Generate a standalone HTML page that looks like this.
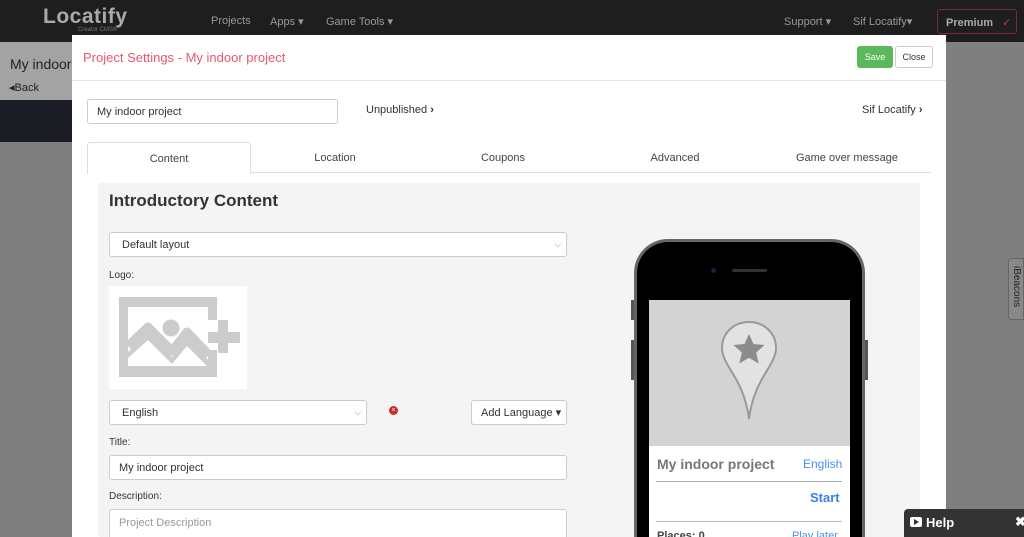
<!DOCTYPE html>
<html style="overflow:hidden;height:537px"><head><style>
*{box-sizing:border-box;margin:0;padding:0}
html,body{overflow:hidden}
body{width:1024px;height:537px;background:#7f7f7f;font-family:"Liberation Sans",sans-serif;position:relative;color:#333}
.a{position:absolute}
.nav{left:0;top:0;width:1024px;height:42px;background:#1e1e1e}
.nl{color:#999;font-size:11px;top:15px}
.inp{background:#fff;border:1px solid #ccc;border-radius:3px;font-size:11px;padding-left:9px;display:flex;align-items:center}
.tab{top:142px;height:31px;font-size:11px;display:flex;align-items:center;justify-content:center;color:#444}
</style></head><body>
<div class="a nav"></div>
<div class="a" style="left:43px;top:5px;color:#aaa;font-size:21px;font-weight:bold;letter-spacing:0.5px">Locatify</div>
<div class="a" style="left:78px;top:27px;color:#777;font-size:6px">Creator CMS®</div>
<div class="a nl" style="left:211px">Projects</div>
<div class="a nl" style="left:270px">Apps ▾</div>
<div class="a nl" style="left:326px">Game Tools ▾</div>
<div class="a nl" style="left:784px">Support ▾</div>
<div class="a nl" style="left:853px">Sif Locatify▾</div>
<div class="a" style="left:937px;top:9px;width:80px;height:25px;border:1px solid #7a2a3a;border-radius:3px;color:#aaa;font-size:11px;font-weight:bold;padding:6px 0 0 8px">Premium <span style="color:#c0394f;font-weight:normal;margin-left:6px">✓</span></div>
<div class="a" style="left:0;top:42px;width:72px;height:58px;background:#a3a3a3"></div>
<div class="a" style="left:10px;top:56px;font-size:14px;color:#222">My indoor</div>
<div class="a" style="left:9px;top:81px;font-size:11px;color:#222">◂Back</div>
<div class="a" style="left:0;top:100px;width:72px;height:42px;background:#1b1d24"></div>
<div class="a" style="left:72px;top:35px;width:874px;height:502px;background:#fff"></div>
<div class="a" style="left:83px;top:50px;font-size:13px;color:#e8586f">Project Settings - My indoor project</div>
<div class="a" style="left:857px;top:46px;width:36px;height:22px;background:#5cb85c;border-radius:3px;color:#fff;font-size:9px;display:flex;align-items:center;justify-content:center">Save</div>
<div class="a" style="left:895px;top:46px;width:38px;height:22px;border:1px solid #ccc;border-radius:3px;color:#333;font-size:9px;display:flex;align-items:center;justify-content:center">Close</div>
<div class="a" style="left:72px;top:80px;width:874px;height:1px;background:#e5e5e5"></div>
<div class="a inp" style="left:87px;top:99px;width:251px;height:25px">My indoor project</div>
<div class="a" style="left:366px;top:104px;font-size:11px">Unpublished <b>›</b></div>
<div class="a" style="left:862px;top:104px;font-size:11px">Sif Locatify <b>›</b></div>
<div class="a" style="left:87px;top:172px;width:844px;height:1px;background:#ddd"></div>
<div class="a tab" style="left:87px;width:164px;background:#fff;border:1px solid #ddd;border-bottom:none;border-radius:3px 3px 0 0;height:32px">Content</div>
<div class="a tab" style="left:251px;width:168px">Location</div>
<div class="a tab" style="left:419px;width:168px">Coupons</div>
<div class="a tab" style="left:591px;width:168px">Advanced</div>
<div class="a tab" style="left:763px;width:168px">Game over message</div>
<div class="a" style="left:98px;top:183px;width:822px;height:354px;background:#f4f4f4;border-radius:3px"></div>
<div class="a" style="left:109px;top:191px;font-size:17px;font-weight:bold;color:#333">Introductory Content</div>
<div class="a inp" style="left:109px;top:232px;width:458px;height:25px;padding-left:12px">Default layout<span style="position:absolute;right:5px;font-size:8px;color:#888">⌵</span></div>
<div class="a" style="left:109px;top:270px;font-size:10px">Logo:</div>
<div class="a" style="left:109px;top:286px;width:138px;height:103px;background:#fff"></div>
<svg class="a" style="left:109px;top:286px" width="138" height="103">
<path d="M10 11h98v23h-9V21H19v60h80v-17h9v27H10z" fill="#ccc"/>
<path d="M19 60l20-19 24 24 15-19 22 23" fill="none" stroke="#ccc" stroke-width="9" stroke-linejoin="round"/>
<path d="M19 66l20-19 24 24 15-19 22 23V81H19z" fill="#ccc"/>
<path d="M19 72l20-18 24 24 15-18 20 20H19z" fill="#fff"/>
<circle cx="62" cy="42" r="8.5" fill="#ccc"/>
<path d="M109 34h10v12h12v11h-12v10h-10V57H99V46h10z" fill="#ccc"/></svg>
<div class="a inp" style="left:109px;top:400px;width:258px;height:25px;padding-left:12px">English<span style="position:absolute;right:5px;font-size:8px;color:#888">⌵</span></div>
<div class="a" style="left:389px;top:406px;width:9px;height:9px;border-radius:50%;background:#c9302c;color:#fff;font-size:7px;line-height:9px;text-align:center">×</div>
<div class="a inp" style="left:471px;top:400px;width:96px;height:25px;color:#333">Add Language ▾</div>
<div class="a" style="left:109px;top:437px;font-size:10px">Title:</div>
<div class="a inp" style="left:109px;top:455px;width:458px;height:25px">My indoor project</div>
<div class="a" style="left:109px;top:491px;font-size:10px">Description:</div>
<div class="a inp" style="left:109px;top:509px;width:458px;height:28px;color:#999;align-items:flex-start;padding-top:7px;border-bottom:none;border-radius:3px 3px 0 0">Project Description</div>
<div class="a" style="left:634px;top:239px;width:231px;height:298px;background:#000;border:3px solid #666;border-bottom:none;border-radius:34px 34px 0 0"></div>
<div class="a" style="left:631px;top:300px;width:3px;height:20px;background:#555"></div>
<div class="a" style="left:631px;top:340px;width:3px;height:40px;background:#555"></div>
<div class="a" style="left:865px;top:340px;width:3px;height:40px;background:#555"></div>
<div class="a" style="left:711px;top:268px;width:5px;height:5px;border-radius:50%;background:#1a2040"></div>
<div class="a" style="left:732px;top:269px;width:35px;height:3px;border-radius:2px;background:#333"></div>
<div class="a" style="left:649px;top:300px;width:201px;height:237px;background:#fff"></div>
<div class="a" style="left:649px;top:300px;width:201px;height:146px;background:#d3d3d3"></div>
<svg class="a" style="left:718px;top:320px" width="62" height="102"><path d="M31 2C16 2 4 13 4 28c0 18 22 30 27 71 5-41 27-53 27-71C58 13 46 2 31 2z" fill="#e2e2e2" stroke="#999" stroke-width="2"/><path d="M31 14l4.5 10 11 1-8.3 7.5 2.5 11-9.7-5.7-9.7 5.7 2.5-11-8.3-7.5 11-1z" fill="#8c8c8c"/></svg>
<div class="a" style="left:657px;top:456px;font-size:14px;font-weight:bold;color:#777">My indoor project</div>
<div class="a" style="left:803px;top:457px;font-size:12px;color:#4a8ef0">English</div>
<div class="a" style="left:656px;top:481px;width:186px;height:1px;background:#aaa"></div>
<div class="a" style="left:810px;top:490px;font-size:13px;font-weight:bold;color:#3a7ff0">Start</div>
<div class="a" style="left:656px;top:521px;width:186px;height:1px;background:#bbb"></div>
<div class="a" style="left:657px;top:530px;font-size:11px;font-weight:bold;color:#444">Places: 0</div>
<div class="a" style="left:792px;top:530px;font-size:11px;color:#4a8ef0">Play later</div>
<div class="a" style="left:1008px;top:258px;width:16px;height:62px;background:#888;border:1px solid #666;border-radius:3px 0 0 3px"></div>
<div class="a" style="left:1011px;top:266px;font-size:10px;color:#222;writing-mode:vertical-rl">iBeacons</div>
<div class="a" style="left:904px;top:509px;width:120px;height:28px;background:#333;border-radius:4px 0 0 0"></div>
<div class="a" style="left:910px;top:517px;width:12px;height:10px;background:#fff;border-radius:2px"></div>
<div class="a" style="left:914px;top:519px;width:0;height:0;border-left:5px solid #333;border-top:3px solid transparent;border-bottom:3px solid transparent"></div>
<div class="a" style="left:926px;top:515px;font-size:13px;color:#fff;font-weight:bold">Help</div>
<div class="a" style="left:1015px;top:514px;font-size:13px;color:#fff;font-weight:bold">✖</div>
</body></html>
